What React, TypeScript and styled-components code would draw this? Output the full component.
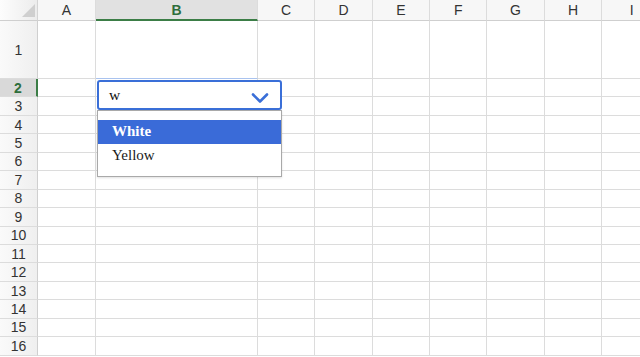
import React from "react"
import styled, { createGlobalStyle } from "styled-components"

const GlobalStyle = createGlobalStyle`
    html, body {
        margin: 0;
        padding: 0;
        background: #fff;
        overflow: hidden;
    }
    body {
        font-family: "Liberation Sans", Arial, sans-serif;
    }
`

const columns = ['A', 'B', 'C', 'D', 'E', 'F', 'G', 'H', 'I']
const colWidths = [58, 162, 57.3, 57.3, 57.5, 57.3, 57.3, 57.5, 60]
const rowCount = 16
const activeCol = 'B'
const activeRow = 2

const rowHeight = (row: number) => (row === 1 ? 58 : 18.45)

const Sheet = styled.div`
    display: grid;
    grid-template-columns: 38px ${colWidths.map(w => `${w}px`).join(' ')};
    grid-template-rows: 21px ${Array.from({ length: rowCount }, (_, i) => `${rowHeight(i + 1)}px`).join(' ')};
    width: 640px;
    height: 357px;
    overflow: hidden;
    position: relative;
`

const Corner = styled.div`
    position: relative;
    background: linear-gradient(to right, #fdfdfd, #ececec);
    border-right: 1px solid #d4d4d4;
    border-bottom: 1px solid #cfcfcf;
    box-sizing: border-box;

    &::after {
        content: '';
        position: absolute;
        right: 2px;
        bottom: 3px;
        width: 0;
        height: 0;
        border-left: 13px solid transparent;
        border-bottom: 13px solid #cfcfcf;
    }
`

const ColHeader = styled.div<{ $active?: boolean }>`
    display: flex;
    align-items: center;
    justify-content: center;
    box-sizing: border-box;
    font-size: 14px;
    color: ${p => (p.$active ? '#2e6e3c' : '#333')};
    font-weight: ${p => (p.$active ? 700 : 400)};
    background: ${p => (p.$active ? '#e1e1e1' : '#f7f7f7')};
    border-right: 1px solid #dcdcdc;
    border-bottom: ${p => (p.$active ? '2px solid #3b7d46' : '1px solid #cfcfcf')};
    padding-top: ${p => (p.$active ? '1px' : '0')};
`

const RowHeader = styled.div<{ $active?: boolean }>`
    display: flex;
    align-items: center;
    justify-content: center;
    box-sizing: border-box;
    font-size: 14px;
    color: ${p => (p.$active ? '#2e6e3c' : '#333')};
    font-weight: ${p => (p.$active ? 700 : 400)};
    background: ${p => (p.$active ? '#d9d9d9' : 'linear-gradient(to right, #fafafa, #efefef)')};
    border-right: ${p => (p.$active ? '2px solid #3b7d46' : '1px solid #cfcfcf')};
    border-bottom: 1px solid #dcdcdc;
`

const Cell = styled.div<{ $selected?: boolean }>`
    position: relative;
    box-sizing: border-box;
    background: #fff;
    border-right: 1px solid #dcdcdc;
    border-bottom: 1px solid #dcdcdc;
    ${p => p.$selected && 'border-top: 1px solid #a9c3ef; margin-top: -1px;'}
`

const Dropdown = styled.div`
    position: absolute;
    left: 1px;
    top: 1px;
    z-index: 2;
    width: 185px;
`

const SelectBox = styled.div`
    display: flex;
    align-items: center;
    justify-content: space-between;
    box-sizing: border-box;
    height: 30px;
    padding: 0 11px 0 10px;
    background: #fff;
    border: 2px solid #3a6fd8;
    border-radius: 3px;
    font-family: "Liberation Serif", "Times New Roman", serif;
    font-size: 15.5px;
    color: #111;
`

const Chevron = styled.svg`
    width: 18px;
    height: 12px;
    margin-top: 5px;
`

const OptionList = styled.div`
    box-sizing: border-box;
    margin-top: 0;
    height: 67px;
    padding-top: 9px;
    background: #fff;
    border: 1px solid #a9a9a9;
    box-shadow: 0 1px 2px rgba(0, 0, 0, 0.12);
`

const Option = styled.div<{ $highlighted?: boolean }>`
    height: 23.5px;
    display: flex;
    align-items: center;
    padding-left: 14px;
    font-family: "Liberation Serif", "Times New Roman", serif;
    font-size: 15px;
    background: ${p => (p.$highlighted ? '#3a6bd8' : 'transparent')};
    color: ${p => (p.$highlighted ? '#fff' : '#1a1a1a')};
    font-weight: ${p => (p.$highlighted ? 700 : 400)};
`

const ListDropdown = () => (
    <Dropdown>
        <SelectBox>
            <span>w</span>
            <Chevron viewBox="0 0 18 12">
                <path d="M2 2.5 L9 9.5 L16 2.5" fill="none" stroke="#3a6fd8" strokeWidth="2.6" strokeLinecap="round" strokeLinejoin="round" />
            </Chevron>
        </SelectBox>
        <OptionList>
            <Option $highlighted>White</Option>
            <Option>Yellow</Option>
        </OptionList>
    </Dropdown>
)

export default function App() {
    const rows = Array.from({ length: rowCount }, (_, i) => i + 1)
    return (
        <>
            <GlobalStyle />
            <Sheet>
                <Corner />
                {columns.map(c => (
                    <ColHeader key={c} $active={c === activeCol}>{c}</ColHeader>
                ))}
                {rows.map(r => (
                    <React.Fragment key={r}>
                        <RowHeader $active={r === activeRow}>{r}</RowHeader>
                        {columns.map(c => {
                            const isActive = r === activeRow && c === activeCol
                            return (
                                <Cell key={c} $selected={isActive}>
                                    {isActive && <ListDropdown />}
                                </Cell>
                            )
                        })}
                    </React.Fragment>
                ))}
            </Sheet>
        </>
    )
}
